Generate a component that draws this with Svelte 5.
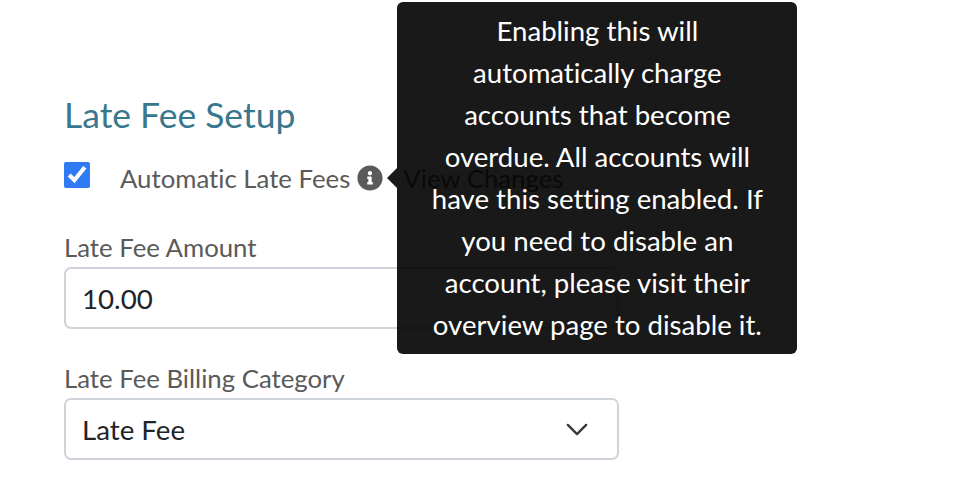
<script>
    let amount = "10.00";
    let category = "Late Fee";
    let autoFees = true;
</script>

<div class="page">
    <h2 class="title">Late Fee Setup</h2>

    <div class="auto-row">
        <input type="checkbox" class="check" bind:checked={autoFees} />
        <span class="auto-label">Automatic Late Fees</span>
        <span class="info">
            <svg viewBox="0 0 512 512" width="26" height="26">
                <path fill="#5a5a5a" d="M256 8C119 8 8 119 8 256s111 248 248 248 248-111 248-248S393 8 256 8zm0 110c23.200 0 42 18.800 42 42s-18.800 42-42 42-42-18.800-42-42 18.800-42 42-42zm56 254c0 6.600-5.400 12-12 12h-88c-6.600 0-12-5.400-12-12v-24c0-6.600 5.400-12 12-12h12v-64h-12c-6.600 0-12-5.400-12-12v-24c0-6.600 5.400-12 12-12h64c6.600 0 12 5.400 12 12v100h12c6.600 0 12 5.400 12 12v24z"/>
            </svg>
            <div class="tooltip">
                Enabling this will automatically charge accounts that become overdue. All accounts will have this setting enabled. If you need to disable an account, please visit their overview page to disable it.
            </div>
        </span>
        <span class="view-link">View Changes</span>
    </div>

    <label class="field">
        <span class="field-label">Late Fee Amount</span>
        <input type="text" class="input" bind:value={amount} />
    </label>

    <label class="field">
        <span class="field-label">Late Fee Billing Category</span>
        <div class="input select">
            <span>{category}</span>
            <svg viewBox="0 0 24 14" width="22" height="13">
                <path d="M2 2l10 10L22 2" fill="none" stroke="#343a40" stroke-width="2.600" stroke-linecap="round" stroke-linejoin="round"/>
            </svg>
        </div>
    </label>
</div>

<style>
    :global(body) {
        background: #fff;
    }

    .page {
        height: 490px;
        box-sizing: border-box;
        padding: 93px 0 0 64px;
        font-family: Lato, sans-serif;
        font-variant-ligatures: none;
        overflow: hidden;
    }

    .title {
        margin: 0 0 26px;
        font-size: 35.5px;
        line-height: 44px;
        font-weight: 400;
        color: #39778c;
    }

    .auto-row {
        display: flex;
        align-items: center;
        height: 30px;
        margin-bottom: 38px;
    }

    .check {
        align-self: flex-start;
        width: 26px;
        height: 26px;
        margin: -1px 30px 0 0;
        accent-color: #2f7bf6;
    }

    .auto-label {
        font-size: 25.75px;
        color: #5a5a5a;
    }

    .info {
        position: relative;
        display: flex;
        margin-left: 7px;
    }

    .tooltip {
        position: absolute;
        left: 40px;
        top: -163px;
        width: 400px;
        box-sizing: border-box;
        padding: 8px 20px;
        background: rgba(0, 0, 0, 0.9);
        color: #fff;
        border-radius: 6px;
        font-size: 27.6px;
        line-height: 42px;
        text-align: center;
        z-index: 2;
    }

    .tooltip::before {
        content: "";
        position: absolute;
        left: -10px;
        top: 166px;
        border-style: solid;
        border-width: 10px 10px 10px 0;
        border-color: transparent rgba(0, 0, 0, 0.9) transparent transparent;
    }

    .view-link {
        margin-left: 20px;
        font-size: 25.75px;
        color: #5a5a5a;
    }

    .field {
        display: block;
        margin-bottom: 33px;
    }

    .field-label {
        display: block;
        margin-bottom: 4px;
        font-size: 25.75px;
        line-height: 32px;
        color: #5a5a5a;
    }

    .input {
        display: block;
        width: 555px;
        height: 62px;
        box-sizing: border-box;
        padding: 0 16px;
        border: 2px solid #ced4da;
        border-radius: 7px;
        font-family: inherit;
        font-size: 27.7px;
        color: #212529;
        background: #fff;
        outline: none;
    }

    .select {
        display: flex;
        align-items: center;
        justify-content: space-between;
        padding-right: 29px;
    }
</style>
